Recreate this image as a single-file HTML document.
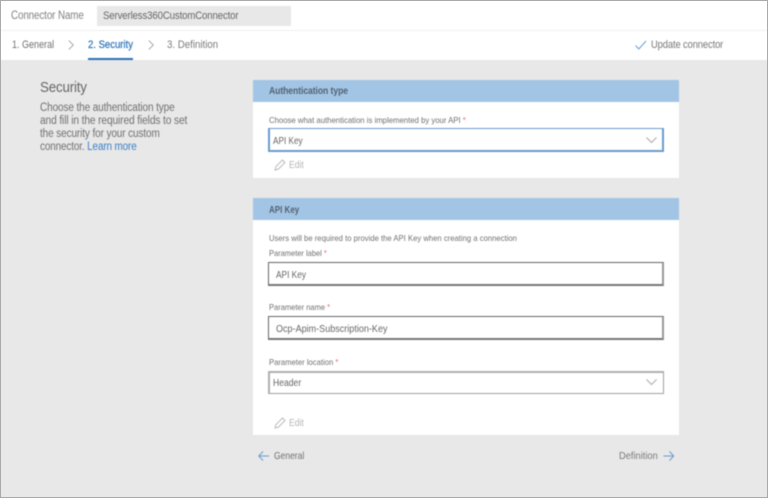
<!DOCTYPE html>
<html><head><meta charset="utf-8">
<style>
html,body{margin:0;padding:0;width:768px;height:498px;overflow:hidden;background:#e8e8e8;}
body{font-family:"Liberation Sans",sans-serif;position:relative;}
.a{position:absolute;white-space:nowrap;line-height:1;color:#666;transform-origin:0 50%;}
.box{position:absolute;box-sizing:border-box;background:#fff;}
svg{position:absolute;overflow:visible;fill:none;}
#wrap{position:absolute;left:0;top:0;width:768px;height:498px;filter:blur(.45px);}
</style></head><body>
<div id="wrap">
<div class="box" style="left:0;top:0;width:768px;height:60px"></div>
<div class="box" style="left:0;top:30px;width:768px;height:1px;background:#efefef"></div>
<div class="a" style="left:11px;top:11px;font-size:11.5px;color:#808080;letter-spacing:-.1px;transform:scaleX(.85)">Connector Name</div>
<div class="box" style="left:97px;top:6px;width:194px;height:20px;background:#e8e8e8"></div>
<div class="a" style="left:103px;top:11px;font-size:11px;color:#666;letter-spacing:-.16px;transform:scaleX(.877)">Serverless360CustomConnector</div>

<div class="a" style="left:12px;top:40px;font-size:11px;color:#707070;transform:scaleX(.82)">1. General</div>
<svg style="left:68px;top:40px" width="6" height="10"><path d="M.8 .5L5.3 5L.8 9.5" stroke="#aaa" stroke-width="1"/></svg>
<div class="a" style="left:88px;top:40px;font-size:11px;color:#2a72b8;-webkit-text-stroke:.2px #2a72b8;transform:scaleX(.865)">2. Security</div>
<div class="box" style="left:88px;top:58px;width:45px;height:2px;background:#2a72b8"></div>
<svg style="left:148px;top:40px" width="6" height="10"><path d="M.8 .5L5.3 5L.8 9.5" stroke="#aaa" stroke-width="1"/></svg>
<div class="a" style="left:167px;top:40px;font-size:11px;color:#7a7a7a;transform:scaleX(.88)">3. Definition</div>
<svg style="left:635px;top:40px" width="12" height="10"><path d="M.5 5.5L3.8 9L11 1" stroke="#6f9fcc" stroke-width="1"/></svg>
<div class="a" style="left:651px;top:40px;font-size:11px;color:#777;letter-spacing:-.12px;transform:scaleX(.85)">Update connector</div>

<div class="a" style="left:40px;top:80px;font-size:15px;color:#666;letter-spacing:-.2px;transform:scaleX(.89)">Security</div>
<div class="a" style="left:40px;top:103px;font-size:11.5px;line-height:11px;color:#707070;letter-spacing:-.13px;transform:scaleX(.87)">Choose the authentication type</div>
<div class="a" style="left:40px;top:116px;font-size:11.5px;line-height:11px;color:#707070;letter-spacing:-.13px;transform:scaleX(.885)">and fill in the required fields to set</div>
<div class="a" style="left:40px;top:129px;font-size:11.5px;line-height:11px;color:#707070;letter-spacing:-.13px;transform:scaleX(.87)">the security for your custom</div>
<div class="a" style="left:40px;top:142px;font-size:11.5px;line-height:11px;color:#707070;letter-spacing:-.13px;transform:scaleX(.86)">connector. <span style="color:#3a80c4">Learn more</span></div>

<div class="box" style="left:253px;top:80px;width:426px;height:98px"></div>
<div class="box" style="left:253px;top:80px;width:426px;height:22px;background:#a2c5e6"></div>
<div class="a" style="left:269px;top:87px;font-size:10px;font-weight:700;color:#54626f;letter-spacing:-.08px;transform:scaleX(.86)">Authentication type</div>
<div class="a" style="left:269px;top:116px;font-size:8.5px;color:#707070;letter-spacing:-.02px;transform:scaleX(.916)">Choose what authentication is implemented by your API <span style="color:#e66">*</span></div>
<div class="box" style="left:268px;top:128px;width:396px;height:24px;border:1px solid #6a9bcf;border-bottom-width:2px;border-right-width:2px;border-left-width:2px"></div>
<div class="a" style="left:273px;top:137px;font-size:10px;color:#666;transform:scaleX(.82)">API Key</div>
<svg style="left:646px;top:137px" width="11" height="7"><path d="M.5 .5L5.5 5.5L10.5 .5" stroke="#aaa" stroke-width="1"/></svg>
<svg style="left:274px;top:159px" width="12" height="12"><path d="M1 11L2 7.5L8.5 1L11 3.5L4.5 10Z" stroke="#bbb" stroke-width="1"/></svg>
<div class="a" style="left:289px;top:161px;font-size:10px;color:#b5b5b5;transform:scaleX(.86)">Edit</div>

<div class="box" style="left:253px;top:198px;width:426px;height:237px"></div>
<div class="box" style="left:253px;top:198px;width:426px;height:22px;background:#a2c5e6"></div>
<div class="a" style="left:269px;top:206px;font-size:10px;font-weight:700;color:#54626f;transform:scaleX(.8)">API Key</div>
<div class="a" style="left:269px;top:234px;font-size:8.5px;color:#707070;letter-spacing:.02px;transform:scaleX(.9)">Users will be required to provide the API Key when creating a connection</div>
<div class="a" style="left:269px;top:249px;font-size:8.5px;color:#707070;transform:scaleX(.88)">Parameter label <span style="color:#e66">*</span></div>
<div class="box" style="left:268px;top:262px;width:396px;height:24px;border:1px solid #666;border-right:2px solid #999;border-bottom:2px solid #777"></div>
<div class="a" style="left:276px;top:271px;font-size:10px;color:#666;transform:scaleX(.83)">API Key</div>
<div class="a" style="left:269px;top:303px;font-size:8.5px;color:#707070;transform:scaleX(.885)">Parameter name <span style="color:#e66">*</span></div>
<div class="box" style="left:268px;top:316px;width:396px;height:24px;border:1px solid #666;border-right:2px solid #999;border-bottom:2px solid #777"></div>
<div class="a" style="left:276px;top:325px;font-size:10px;color:#666;letter-spacing:.02px;transform:scaleX(.9)">Ocp-Apim-Subscription-Key</div>
<div class="a" style="left:269px;top:358px;font-size:8.5px;color:#707070;transform:scaleX(.9)">Parameter location <span style="color:#e66">*</span></div>
<div class="box" style="left:268px;top:371px;width:396px;height:23px;border:1px solid #a0a0a0;border-top:2px solid #b0b0b0;border-left:2px solid #b0b0b0"></div>
<div class="a" style="left:273px;top:379px;font-size:10px;color:#666;transform:scaleX(.86)">Header</div>
<svg style="left:646px;top:379px" width="11" height="7"><path d="M.5 .5L5.5 5.5L10.5 .5" stroke="#aaa" stroke-width="1"/></svg>
<svg style="left:274px;top:417px" width="12" height="12"><path d="M1 11L2 7.5L8.5 1L11 3.5L4.5 10Z" stroke="#bbb" stroke-width="1"/></svg>
<div class="a" style="left:289px;top:419px;font-size:10px;color:#b5b5b5;transform:scaleX(.86)">Edit</div>

<svg style="left:258px;top:451px" width="12" height="10"><path d="M11 5H.8M5 .5L.8 5L5 9.5" stroke="#6a9bcf" stroke-width="1"/></svg>
<div class="a" style="left:274px;top:451px;font-size:10.5px;color:#707070;transform:scaleX(.81)">General</div>
<div class="a" style="left:619px;top:451px;font-size:10.5px;color:#7a7a7a;transform:scaleX(.886)">Definition</div>
<svg style="left:663px;top:451px" width="12" height="10"><path d="M.5 5H10.7M6.5 .5L10.7 5L6.5 9.5" stroke="#6a9bcf" stroke-width="1"/></svg>
</div>
<div style="position:absolute;left:0;top:0;width:768px;height:498px;box-sizing:border-box;border:1px solid #aaa"></div>
</body></html>
